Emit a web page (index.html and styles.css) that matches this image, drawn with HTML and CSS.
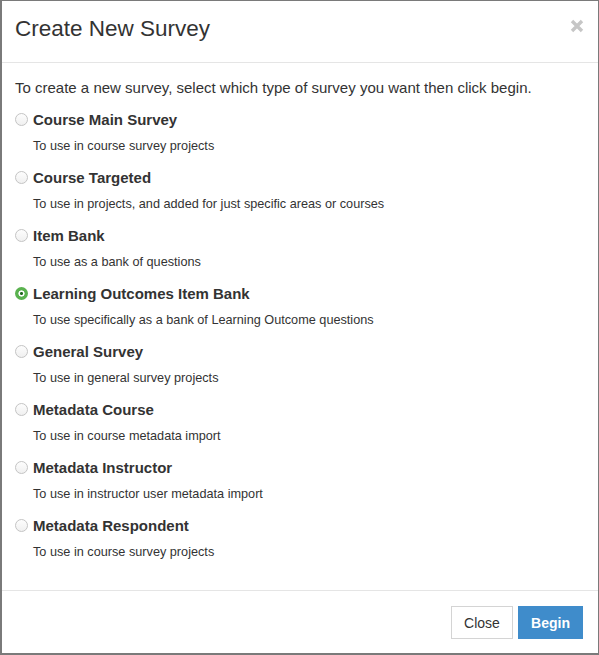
FILE: index.html
```html
<!DOCTYPE html>
<html>
<head>
<meta charset="utf-8">
<link rel="stylesheet" href="styles.css">
</head>
<body>
<div class="modal">
  <div class="modal-header">
    <h4 class="modal-title">Create New Survey</h4>
    <span class="close" aria-label="Close">
      <svg width="14" height="14" viewBox="0 0 14 14"><path d="M2 2 L12 12 M12 2 L2 12" stroke="#c6c6c6" stroke-width="3.4" stroke-linecap="butt"/></svg>
    </span>
  </div>
  <div class="modal-body">
    <p class="intro">To create a new survey, select which type of survey you want then click begin.</p>
    <div class="option">
      <div class="label-row"><span class="radio"></span><span class="label">Course Main Survey</span></div>
      <div class="desc">To use in course survey projects</div>
    </div>
    <div class="option">
      <div class="label-row"><span class="radio"></span><span class="label">Course Targeted</span></div>
      <div class="desc">To use in projects, and added for just specific areas or courses</div>
    </div>
    <div class="option">
      <div class="label-row"><span class="radio"></span><span class="label">Item Bank</span></div>
      <div class="desc">To use as a bank of questions</div>
    </div>
    <div class="option">
      <div class="label-row"><span class="radio checked"></span><span class="label">Learning Outcomes Item Bank</span></div>
      <div class="desc">To use specifically as a bank of Learning Outcome questions</div>
    </div>
    <div class="option">
      <div class="label-row"><span class="radio"></span><span class="label">General Survey</span></div>
      <div class="desc">To use in general survey projects</div>
    </div>
    <div class="option">
      <div class="label-row"><span class="radio"></span><span class="label">Metadata Course</span></div>
      <div class="desc">To use in course metadata import</div>
    </div>
    <div class="option">
      <div class="label-row"><span class="radio"></span><span class="label">Metadata Instructor</span></div>
      <div class="desc">To use in instructor user metadata import</div>
    </div>
    <div class="option">
      <div class="label-row"><span class="radio"></span><span class="label">Metadata Respondent</span></div>
      <div class="desc">To use in course survey projects</div>
    </div>
  </div>
  <div class="modal-footer">
    <button class="btn btn-default">Close</button>
    <button class="btn btn-primary">Begin</button>
  </div>
</div>
</body>
</html>
```
FILE: styles.css
```css
html, body {
  margin: 0;
  padding: 0;
  height: 100%;
}
body {
  background: #7a7a7a;
  font-family: "Liberation Sans", Arial, Helvetica, sans-serif;
  color: #333;
  padding: 1px 1px 2px 2px;
  box-sizing: border-box;
}
.modal {
  background: #fff;
  height: 100%;
  display: flex;
  flex-direction: column;
}
.modal-header {
  display: flex;
  align-items: center;
  justify-content: space-between;
  padding: 12px 14px 18px 13px;
  border-bottom: 1px solid #e5e5e5;
}
.modal-title {
  margin: 0;
  font-size: 22.5px;
  font-weight: normal;
  line-height: 31px;
  color: #333;
}
.close {
  display: flex;
  width: 14px;
  height: 14px;
  margin-top: -6px;
}
.modal-body {
  flex: 1;
  padding: 15px 13px 27px 13px;
}
.intro {
  margin: 0 0 1px;
  font-size: 15px;
  line-height: 20px;
}
.option {
  margin-top: 11px;
}
.label-row {
  display: flex;
  align-items: center;
  height: 20px;
}
.radio {
  width: 13px;
  height: 13px;
  box-sizing: border-box;
  border-radius: 50%;
  border: 1px solid #c4c4c4;
  background: linear-gradient(#fdfdfd, #f0f0f0);
  margin-right: 5px;
  flex: none;
}
.radio.checked {
  border: none;
  background: radial-gradient(circle, #1f6b1d 0 1.2px, #ffffff 1.8px 2.8px, #5ab24f 3.4px);
}
.label {
  font-size: 15px;
  font-weight: bold;
  color: #333;
}
.desc {
  margin-top: 8px;
  margin-left: 18px;
  font-size: 12.7px;
  line-height: 19px;
  color: #333;
}
.modal-footer {
  display: flex;
  justify-content: flex-end;
  gap: 5px;
  padding: 15px 15px 14px 15px;
  border-top: 1px solid #e5e5e5;
}
.btn {
  height: 33px;
  font-family: "Liberation Sans", Arial, Helvetica, sans-serif;
  font-size: 14px;
  border-radius: 0;
  border: 1px solid transparent;
  padding: 0 12px;
  cursor: pointer;
}
.btn-default {
  background: #fff;
  border-color: #d4d4d4;
  color: #333;
  width: 62px;
}
.btn-primary {
  background: #3f8ccb;
  border-color: #3f8ccb;
  color: #fff;
  font-weight: bold;
  width: 65px;
}
```
